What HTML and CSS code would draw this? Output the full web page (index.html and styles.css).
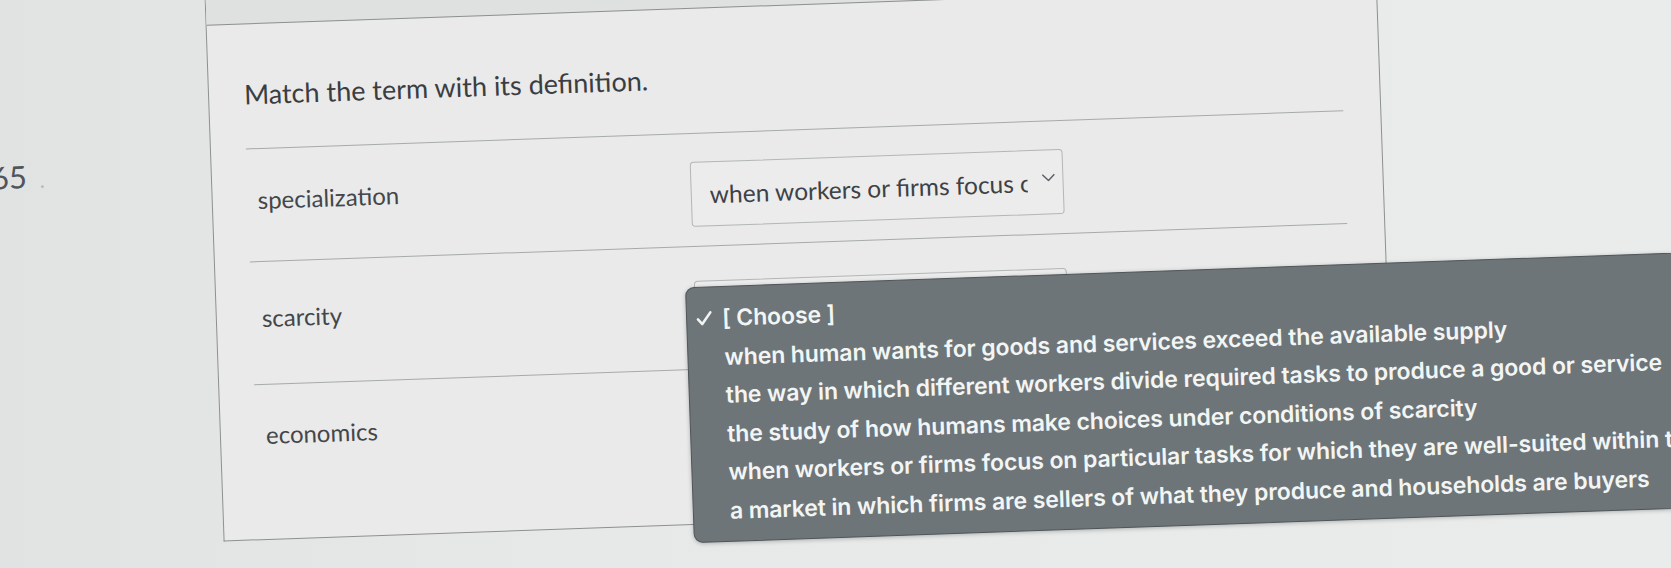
FILE: index.html
```html
<!DOCTYPE html>
<html lang="en">
<head>
<meta charset="utf-8">
<title>Match the term with its definition</title>
<link rel="stylesheet" href="styles.css">
</head>
<body>
<div class="stage">
  <div class="gutter"><span class="qnum">65</span><span class="speck">.</span></div>
  <div class="quiz">
    <div class="prev"></div>
    <div class="question">
      <p class="prompt">Match the term with its definition.</p>
      <div class="matches">
        <div class="row">
          <div class="term">specialization</div>
          <div class="select">
            <span class="value">when workers or firms focus on particular tasks</span>
            <svg class="chev" width="14" height="8" viewBox="0 0 14 8"><polyline points="1,1 7,7 13,1" fill="none" stroke="#5a5e62" stroke-width="1.4"/></svg>
          </div>
        </div>
        <div class="row">
          <div class="term">scarcity</div>
          <div class="select">
            <span class="value">[ Choose ]</span>
            <svg class="chev" width="14" height="8" viewBox="0 0 14 8"><polyline points="1,1 7,7 13,1" fill="none" stroke="#5a5e62" stroke-width="1.4"/></svg>
          </div>
        </div>
        <div class="row">
          <div class="term">economics</div>
          <div class="select">
            <span class="value">[ Choose ]</span>
            <svg class="chev" width="14" height="8" viewBox="0 0 14 8"><polyline points="1,1 7,7 13,1" fill="none" stroke="#5a5e62" stroke-width="1.4"/></svg>
          </div>
        </div>
      </div>
    </div>
  </div>
  <ul class="menu">
    <li class="opt selected"><svg class="check" width="18" height="18" viewBox="0 0 18 18"><path d="M2.8 9.6 L7 14.4 L15.4 3" fill="none" stroke="#f1f3f3" stroke-width="2.6" stroke-linecap="round" stroke-linejoin="round"/></svg><span>[ Choose ]</span></li>
    <li class="opt"><span>when human wants for goods and services exceed the available supply</span></li>
    <li class="opt"><span>the way in which different workers divide required tasks to produce a good or service</span></li>
    <li class="opt"><span>the study of how humans make choices under conditions of scarcity</span></li>
    <li class="opt"><span>when workers or firms focus on particular tasks for which they are well-suited within the economy</span></li>
    <li class="opt"><span>a market in which firms are sellers of what they produce and households are buyers</span></li>
  </ul>
</div>
</body>
</html>
```

FILE: styles.css
```css
html, body {
  margin: 0;
  padding: 0;
}
body {
  width: 1671px;
  height: 568px;
  overflow: hidden;
  background: linear-gradient(90deg, #e1e3e2 0%, #e7e9e8 35%, #eaeceb 100%);
  font-family: Lato, "Open Sans", sans-serif;
}
.stage {
  position: relative;
  width: 1671px;
  height: 568px;
  display: flex;
  align-items: flex-start;
  transform: rotate(-2deg);
  transform-origin: 835px 284px;
}
.gutter {
  width: 215px;
  flex: none;
  display: flex;
  align-items: baseline;
  padding-top: 130px;
}
.qnum {
  flex: none;
  margin-left: -5px;
  font-size: 31px;
  line-height: 36px;
  color: #50555c;
}
.speck {
  margin-left: 13px;
  font-size: 20px;
  color: #b0b3b5;
}
.quiz {
  width: 1172px;
  height: 560px;
  margin-top: -40px;
  flex: none;
  box-sizing: border-box;
  border-left: 1.5px solid #8d9091;
  border-right: 1.5px solid #8d9091;
  border-bottom: 1.5px solid #8d9091;
  background: #e9eae9;
  display: flex;
  flex-direction: column;
}
.prev {
  height: 43px;
  flex: none;
  background: #dfe1e0;
  border-bottom: 1.5px solid #8d9091;
}
.question {
  flex: 1;
  display: flex;
  flex-direction: column;
  padding-top: 54px;
}
.prompt {
  margin: 0 0 0 35px;
  font-size: 27px;
  line-height: 32px;
  color: #3a3d41;
}
.matches {
  flex: 1;
  margin: 38px 37px 0 35px;
  display: flex;
  flex-direction: column;
}
.row {
  display: flex;
  align-items: flex-start;
  border-top: 1px solid #a7aaab;
  padding-left: 10px;
  height: 113px;
  box-sizing: border-box;
}
.row:nth-child(2) {
  height: 123px;
}
.row:nth-child(3) {
  flex: 1;
}
.term {
  width: 433px;
  flex: none;
  margin-top: 37px;
  font-size: 24px;
  line-height: 28px;
  color: #43464a;
}
.row:nth-child(2) .term {
  margin-top: 42px;
}
.row:nth-child(3) .term {
  margin-top: 36px;
}
.select {
  width: 373px;
  height: 65px;
  margin-top: 28px;
  box-sizing: border-box;
  border: 1px solid #b3b6b7;
  border-radius: 4px;
  background: #ebeceb;
  display: flex;
  align-items: center;
  padding-left: 18px;
}
.row:nth-child(2) .select {
  margin-top: 34px;
}
.value {
  width: 318px;
  flex: none;
  overflow: hidden;
  white-space: nowrap;
  font-size: 24.5px;
  line-height: 30px;
  color: #3e4145;
}
.chev {
  margin-left: 14px;
  margin-top: -10px;
}
.menu {
  position: absolute;
  left: 685px;
  top: 282px;
  width: 1030px;
  height: 256px;
  margin: 0;
  padding: 12px 0 0 0;
  box-sizing: border-box;
  list-style: none;
  background: #6d7578;
  border: 1px solid #4f5659;
  border-radius: 9px;
  box-shadow: 0 1px 4px rgba(0, 0, 0, 0.25);
  font-family: Inter, "Noto Sans", sans-serif;
  font-weight: 600;
  font-size: 23px;
  color: #f3f5f5;
}
.opt {
  display: flex;
  align-items: center;
  height: 38.5px;
  padding-left: 36px;
  white-space: nowrap;
  letter-spacing: -0.1px;
}
.opt.selected {
  padding-left: 8px;
}
.check {
  width: 18px;
  height: 18px;
  margin-right: 9px;
  flex: none;
}
```
